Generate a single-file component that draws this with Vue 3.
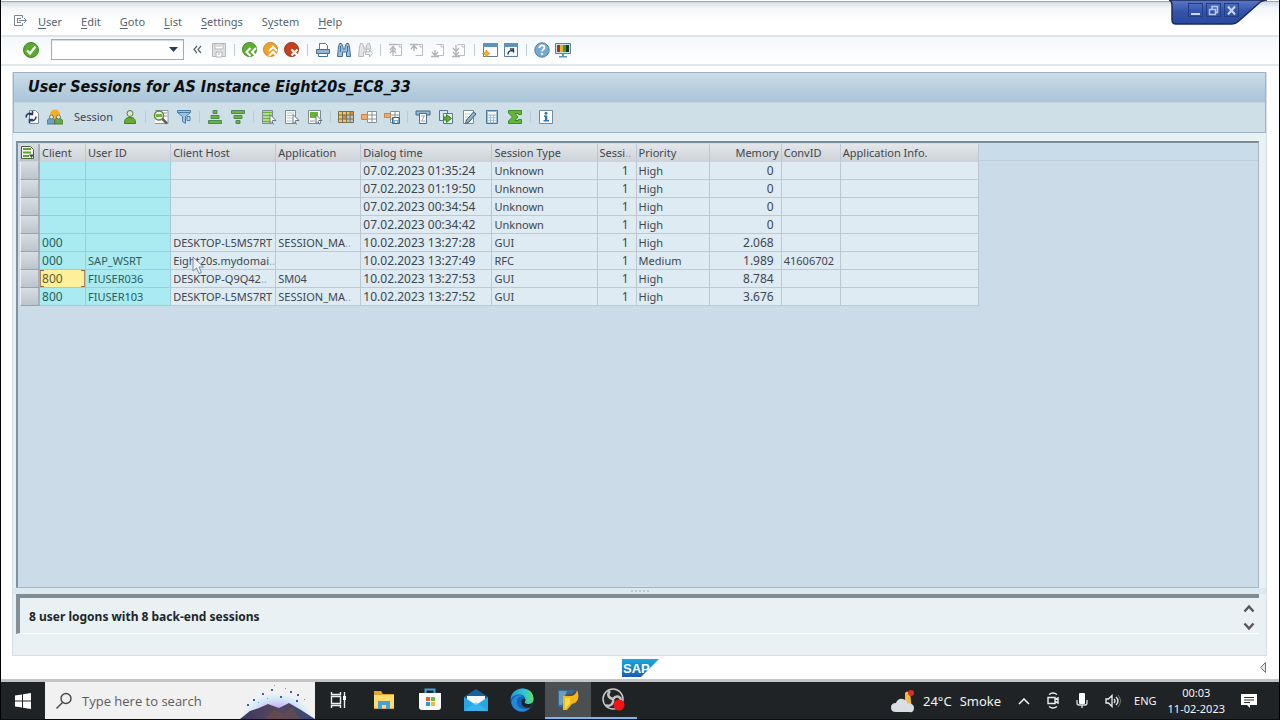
<script setup>
const menus = [
  ['U', 'ser'], ['E', 'dit'], ['G', 'oto'], ['L', 'ist'], ['S', 'ettings'], ['S', 'ystem', 'y'], ['H', 'elp'],
]

const page = '<path d="M3.500 1.500h6l3 3v10h-9z" fill="#fff" stroke="#7c8a97"/>'
const paleSheet = '<path d="M6.500 2.500h7v11h-7" fill="#fff" stroke="#b9bec3"/><path d="M11 2.500v2.500h3" fill="none" stroke="#b9bec3"/>'
const cursor = '<path d="M9 5.500v9l2-2 1.500 3M9 5.500l6 6h-3.500" fill="#fff" stroke="#6b7480"/>'
const grid = '<path d="M6.500 2.500h9v11h-9zM6.500 6h9M6.500 10h9M11 2.500v11" fill="#fff" stroke="#84909b"/>'

const icons = {
  ok: '<circle cx="8" cy="8" r="7.500" fill="#5aaa2e" stroke="#3f8a25"/><path d="M4 8.500l3 3 5.500-7" fill="none" stroke="#fff" stroke-width="2.200"/>',
  save: '<path d="M1.500 1.500h13v13h-13z" fill="#dfe1e3" stroke="#b3b7bb"/><path d="M4 2h8v5H4zM5 10h6v5H5z" fill="#fff" stroke="#b3b7bb"/><path d="M5 4h6M7 12h2" stroke="#b3b7bb"/>',
  back: '<circle cx="7.500" cy="7.500" r="7" fill="#5fae32" stroke="#43852a"/><path d="M8.500 6l-4 4 4 4M14 6l-4 4 4 4" fill="none" stroke="#fff" stroke-width="2"/>',
  exit: '<circle cx="7.500" cy="7.500" r="7" fill="#f2a122" stroke="#c9832b"/><path d="M6 9l4-4 4 4M6 14l4-4 4 4" fill="none" stroke="#fff" stroke-width="2"/>',
  cancel: '<circle cx="7.500" cy="7.500" r="7" fill="#c5401c" stroke="#96321c"/><path d="M7.500 7.500l6 6M13.500 7.500l-6 6" fill="none" stroke="#fff" stroke-width="2.200"/>',
  print: '<path d="M4.500 7V1.500h6l2 2V7" fill="#fff" stroke="#5e7890"/><path d="M1.500 7.500h13v4h-13z" fill="#8fb6d8" stroke="#47708f"/><path d="M3.500 11.500h9v3h-9z" fill="#fff" stroke="#47708f"/>',
  find: '<path d="M2.500 5l1-3.500h2L7 5v2h2V5l1.500-3.500h2l1 3.500 1 9.500h-4V10H6.500v4.500h-5z" fill="#9cc1df" stroke="#3f6d96"/><path d="M4.500 4v6M11.500 4v6" stroke="#3f6d96"/>',
  findNext: '<path d="M2.500 5l1-3.500h2L7 5v2h2V5l1.500-3.500h2l1 3.500v2h-4v3H6.500v4.500h-5z" fill="#e2e4e6" stroke="#b5babf"/><path d="M8.500 10h4V7.500l3 4-3 3.500v-2.500h-4z" fill="#f3f3f3" stroke="#b5babf"/>',
  first: paleSheet + '<path d="M1 2.500h8M5 14V5M2 8l3-3.500L8 8M2 11l3-3.500 3 3.500" fill="none" stroke="#b0b5ba" stroke-width="1.300"/>',
  prev: paleSheet + '<path d="M1 2.500h8M5 9V4M2 7l3-3.500L8 7" fill="none" stroke="#b0b5ba" stroke-width="1.400"/>',
  next: paleSheet + '<path d="M1 14.500h8M5 8v5M2 10l3 3.500L8 10" fill="none" stroke="#b0b5ba" stroke-width="1.400"/>',
  last: paleSheet + '<path d="M1 14.500h8M5 3v9M2 6l3 3.500L8 6M2 10l3 3.500L8 10" fill="none" stroke="#b0b5ba" stroke-width="1.300"/>',
  newSession: '<path d="M1.500 1.500h14v13h-14z" fill="#fff" stroke="#5a7c98"/><path d="M1 1h15v4H1z" fill="#5d93bd"/><path d="M4.500 8l1 2.500 2.500 1-2.500 1-1 2.500-1-2.500-3-1 3-1z" fill="#f4b632" stroke="#d8901f"/>',
  shortcut: '<path d="M1.500 1.500h13v13h-13z" fill="#f8fbfd" stroke="#5a7c98"/><path d="M1 1h14v4H1z" fill="#5d93bd"/><path d="M5 12.500c0-3 1-4 5-4M7 7h3.500v3.500" fill="none" stroke="#263b55" stroke-width="1.400"/>',
  help: '<circle cx="8" cy="8" r="7.200" fill="#78aad0" stroke="#4c7ca4"/><path d="M5.500 6c0-3.500 5-3.500 5-.500 0 2-2.500 2-2.500 4" fill="none" stroke="#fff" stroke-width="1.800"/><circle cx="8" cy="12" r="1.100" fill="#fff"/>',
  screen: '<path d="M.5 1.500h15v10H.5z" fill="#cfe3ea" stroke="#5f8194"/><path d="M2 3h3v7H2z" fill="#bb2828"/><path d="M5 3h3v7H5z" fill="#e8b426"/><path d="M8 3h3v7H8z" fill="#3f9c3b"/><path d="M11 3h3v7h-3z" fill="#173b30"/><path d="M7 12h2v2h3v1.500H4V14h3z" fill="#4f9ba6"/>',
  refresh: '<path d="M5.500 1.500h6l3 3v10h-9z" fill="#fff" stroke="#7c8a97"/><path d="M2 8.500c0-4 3.500-5 6-3.500M8.500 2v3.500H5M12 7.500c0 4-3.500 5-6 3.500M5.500 14v-3.500H9" fill="none" stroke="#2d3872" stroke-width="1.600"/>',
  people: '<circle cx="8" cy="5.500" r="5" fill="#f4ad24"/><path d="M0 15c0-5 2-6 4-6s4 1 4 6z" fill="#6d9fc9" stroke="#48789b"/><circle cx="4.500" cy="8" r="2" fill="#d8e8f0" stroke="#5b7d92"/><path d="M7.500 15c0-5 1-6 3.500-6s5 1 5 6z" fill="#69a549" stroke="#4b7b3b"/><circle cx="11.500" cy="8" r="2" fill="#e5ead9" stroke="#69845c"/>',
  user: '<path d="M2.500 14.500c0-5 2-6 5.500-6s5.500 1 5.500 6z" fill="#64ad2d" stroke="#467b28"/><circle cx="8" cy="4.500" r="3" fill="#dce8cf" stroke="#5c793f"/>',
  detail: '<path d="M2 1.500h13v13H2" fill="#fff" stroke="#89949d"/><path d="M10 4h4M10 7h4" stroke="#89949d"/><circle cx="6" cy="6.500" r="4.500" fill="#eef5e9" stroke="#69803f" stroke-width="1.500"/><path d="M3 5h6v3H3z" fill="#6db23b"/><path d="M9.500 10l4.500 4.500" stroke="#5b6357" stroke-width="2.500"/>',
  filter: '<path d="M1.500 1.500h13v2l-5 4v7l-3-2v-5l-5-4z" fill="#9cc5e2" stroke="#477da6"/><path d="M2 3.500h12" stroke="#477da6"/><path d="M11 7.500h3v4h-3z" fill="#b8d6eb" stroke="#477da6"/>',
  sortUp: '<path d="M6 1.500h4v3H6zM4 6.500h8v3H4zM1.500 11.500h13v3h-13z" fill="#6cb33f" stroke="#4a8a5a"/>',
  sortDown: '<path d="M1.500 1.500h13v3h-13zM4 6.500h8v3H4zM6 11.500h4v3H6z" fill="#6cb33f" stroke="#4a8a5a"/>',
  selectAll: '<path d="M1.500 1.500h10v13h-10z" fill="#fff" stroke="#7c8a97"/><path d="M2 3.500h9M2 6.500h9M2 9.500h7M2 12.500h7" stroke="#67b52c" stroke-width="2"/>' + cursor,
  deselect: '<path d="M1.500 1.500h10v13h-10z" fill="#fff" stroke="#7c8a97"/><path d="M3 4h7M3 6.500h5M3 9h5M3 12h5" stroke="#bac2c8"/>' + cursor,
  selectBlock: '<path d="M1.500 1.500h12v13h-12z" fill="#fff" stroke="#7c8a97"/><path d="M3 3h8v6H3z" fill="#67b52c"/><path d="M3 12h5" stroke="#8d999f"/>' + cursor,
  layout: '<path d="M.5 2.500h15v11H.5z" fill="#f0ca55" stroke="#776f56"/><path d="M4 6h4v4H4zM12 3h3v3h-3z" fill="#e7853d"/><path d="M8 6h7v7H8z" fill="#b8c9cd"/><path d="M.5 6h15M.5 10h15M4.500 2.500v11M8.500 2.500v11M12 2.500v11" stroke="#776f56" fill="none"/>',
  layoutPick: grid + '<path d="M.5 5.500h6v5h-6z" fill="#efad68" stroke="#c98445"/>',
  layoutSave: grid + '<path d="M.5 4.500h6v4h-6z" fill="#efad68" stroke="#c98445"/><path d="M8.500 8.500h7v6h-7z" fill="#84aece" stroke="#3b688e"/><path d="M10 9h4v2h-4zM11 12h2v2h-2z" fill="#fff"/>',
  preview: '<path d="M1 2h14v4H1z" fill="#8eb9d5" stroke="#416884"/><path d="M4.500 4.500h7v10h-7z" fill="#fff" stroke="#536b7d"/><path d="M6 7h4M6 12h4M9 7l-2 5" stroke="#9aa8b2"/>',
  export: '<path d="M1.500 1.500h8v10h-8z" fill="#d8e8f3" stroke="#59788d"/><path d="M5.500 4.500h9v10h-9z" fill="#eff6f8" stroke="#59788d"/><path d="M5.500 8h3V5.500l5 4-5 4V11h-3z" fill="#5cae32" stroke="#37801f"/>',
  edit: '<path d="M2.500 1.500h10v13h-10z" fill="#fff" stroke="#7c8a97"/><path d="M4 5h5M4 8h3M4 11h2" stroke="#b8c3cc"/><path d="M12.500 3l2.500 2-7 8-3.500 1.500 1-3.500z" fill="#8bb4d2" stroke="#395a78"/>',
  calc: '<path d="M2.500 1.500h11v13h-11z" fill="#9dbfd6" stroke="#4e7692"/><path d="M4 3h8v2.500H4z" fill="#fff"/><path d="M4 7.500h2m1 0h2m1 0h2M4 10h2m1 0h2m1 0h2M4 12.500h2m1 0h2m1 0h2" stroke="#fff" stroke-width="1.500"/>',
  sum: '<path d="M1.500 1.500h13v4h-3v-1H8l3 3.500-3 3.500h3.500v-1h3v4h-13V12l4-4-4-4z" fill="#65b637" stroke="#3b8b2c"/>',
  info: '<path d="M1.500 1.500h13v13h-13z" fill="#fff" stroke="#78899a"/><circle cx="8" cy="4.200" r="1.500" fill="#2e77aa"/><path d="M6 6.500h3.300V11H11v1.500H5.500V11H7V8H6z" fill="#2e77aa"/>',
}

const toolbar = [
  ['save', 'Save'], null, ['back', 'Back'], ['exit', 'Exit'], ['cancel', 'Cancel'], null,
  ['print', 'Print'], ['find', 'Find'], ['findNext', 'Find next'], null,
  ['first', 'First page'], ['prev', 'Previous page'], ['next', 'Next page'], ['last', 'Last page'], null,
  ['newSession', 'New session'], ['shortcut', 'Create shortcut'], null, ['help', 'Help'], ['screen', 'Customize layout'],
]
const actions = [
  ['user', 'User'], null, ['detail', 'Details'], ['filter', 'Filter'], null,
  ['sortUp', 'Sort ascending'], ['sortDown', 'Sort descending'], null,
  ['selectAll', 'Select all'], ['deselect', 'Deselect all'], ['selectBlock', 'Select block'], null,
  ['layout', 'Change layout'], ['layoutPick', 'Choose layout'], ['layoutSave', 'Save layout'], null,
  ['preview', 'Print preview'], ['export', 'Export'], ['edit', 'Word processing'], ['calc', 'Spreadsheet'], ['sum', 'Total'], null,
  ['info', 'Information'],
]

const columns = [
  ['Client', 46], ['User ID', 85], ['Client Host', 105], ['Application', 85], ['Dialog time', 131], ['Session Type', 105],
  ['Sessi~', 39], ['Priority', 73], ['Memory', 72], ['ConvID', 59], ['Application Info.', 138],
]
const rows = [
  ['', '', '', '', '07.02.2023 01:35:24', 'Unknown', '1', 'High', '0', '', ''],
  ['', '', '', '', '07.02.2023 01:19:50', 'Unknown', '1', 'High', '0', '', ''],
  ['', '', '', '', '07.02.2023 00:34:54', 'Unknown', '1', 'High', '0', '', ''],
  ['', '', '', '', '07.02.2023 00:34:42', 'Unknown', '1', 'High', '0', '', ''],
  ['000', '', 'DESKTOP-L5MS7RT', 'SESSION_MA~', '10.02.2023 13:27:28', 'GUI', '1', 'High', '2.068', '', ''],
  ['000', 'SAP_WSRT', 'Eight20s.mydomai~', '', '10.02.2023 13:27:49', 'RFC', '1', 'Medium', '1.989', '41606702', ''],
  ['800', 'FIUSER036', 'DESKTOP-Q9Q42~', 'SM04', '10.02.2023 13:27:53', 'GUI', '1', 'High', '8.784', '', ''],
  ['800', 'FIUSER103', 'DESKTOP-L5MS7RT', 'SESSION_MA~', '10.02.2023 13:27:52', 'GUI', '1', 'High', '3.676', '', ''],
]
const digitColumns = [0, 4, 6, 8]
const cellClass = (r, c) => ({
  key: c < 2,
  num: c === 6 || c === 8,
  digits: digitColumns.includes(c),
  picked: r === 6 && c === 0,
})
</script>

<template>
  <div class="desktop">
    <div class="sap">
      <nav class="menu">
        <button class="menu-icon" aria-label="Window menu">
          <svg width="15" height="13" viewBox="0 0 15 13"><path d="M9.500 4V1.500h-8v10h8V9M4 4.500h4M4 8.500h4M4.500 4.500v4" fill="none" stroke="#77838f" /><path d="M6 6.500h7M11 4l2.500 2.500L11 9" fill="none" stroke="#77838f" /></svg>
        </button>
        <button v-for="m in menus" :key="m[1]"><template v-if="m[2]">S<u>y</u>stem</template><template v-else><u>{{ m[0] }}</u>{{ m[1] }}</template></button>
      </nav>

      <div class="winbox">
        <svg class="winshape" width="98" height="28" viewBox="0 0 98 28">
          <defs><linearGradient id="wb" x2="0" y2="1"><stop offset="0" stop-color="#5a78c8" /><stop offset=".5" stop-color="#3253a8" /><stop offset="1" stop-color="#2948a0" /></linearGradient></defs>
          <path d="M0 0q3 1 3 5v15q0 4 4 4h55q5 0 9-4l18-16q4-4 9-4z" fill="url(#wb)" stroke="#1c2a58" stroke-width="1.500" />
        </svg>
        <div class="winbtns">
          <button aria-label="Minimize"><svg width="13" height="13"><path d="M2 10h9" stroke="#c9d8fa" stroke-width="2" /></svg></button>
          <button aria-label="Restore"><svg width="13" height="13"><path d="M2.500 5.500h6v5h-6zM5 5V2.500h5.500v6H9" fill="none" stroke="#b7c9f3" stroke-width="1.500" /></svg></button>
          <button aria-label="Close"><svg width="13" height="13"><path d="M3 2.500l7 8M10 2.500l-7 8" stroke="#c9d8fa" stroke-width="2" /></svg></button>
        </div>
      </div>

      <div class="toolbar">
        <button class="ic" aria-label="Enter"><svg viewBox="0 0 16 16" v-html="icons.ok" /></button>
        <div class="combo">
          <input type="text" aria-label="Command field">
          <button aria-label="Command history"><svg width="9" height="6"><path d="M0 0h9L4.500 5z" fill="#2c3a52" /></svg></button>
        </div>
        <button class="fold" aria-label="Hide command field"><svg width="9" height="9"><path d="M4 1L1 4.500 4 8M8 1L5 4.500 8 8" fill="none" stroke="#59636e" stroke-width="1.200" /></svg></button>
        <template v-for="(t, i) in toolbar" :key="i">
          <button v-if="t" class="ic" :aria-label="t[1]"><svg viewBox="0 0 16 16" v-html="icons[t[0]]" /></button>
          <span v-else class="sep" />
        </template>
      </div>

      <main class="work">
        <header class="head">
          <h1>User Sessions for AS Instance Eight20s_EC8_33</h1>
          <div class="actions">
            <button class="ic" aria-label="Refresh"><svg viewBox="0 0 16 16" v-html="icons.refresh" /></button>
            <button class="ic" aria-label="Users"><svg viewBox="0 0 16 16" v-html="icons.people" /></button>
            <button class="session">Session</button>
            <template v-for="(t, i) in actions" :key="i">
              <button v-if="t" class="ic" :aria-label="t[1]"><svg viewBox="0 0 16 16" v-html="icons[t[0]]" /></button>
              <span v-else class="sep" />
            </template>
          </div>
        </header>

        <section class="list">
          <table>
            <colgroup><col class="selcol"><col v-for="c in columns" :key="c[0]" :style="{ width: c[1] + 'px' }"></colgroup>
            <thead>
              <tr>
                <th class="corner"><button aria-label="Select all rows"><svg width="15" height="15"><path d="M1.500 1.500h9l3 3v9h-12z" fill="#f4f8ee" stroke="#4c5b45" /><path d="M3 4h8M3 7.500h8M3 11h6" stroke="#5da52b" stroke-width="2" /><path d="M9 9.500h5l-2.500 3.500z" fill="#445" /></svg></button></th>
                <th v-for="(c, i) in columns" :key="c[0]" :class="{ num: i === 8 }">{{ c[0].replace('~', '') }}<span v-if="c[0].endsWith('~')" class="more">..</span></th>
              </tr>
            </thead>
            <tbody>
              <tr v-for="(r, ri) in rows" :key="ri">
                <th class="sel" scope="row" aria-label="Select row" />
                <td v-for="(v, ci) in r" :key="ci" :class="cellClass(ri, ci)">{{ v.replace('~', '') }}<span v-if="v.endsWith('~')" class="more">..</span></td>
              </tr>
            </tbody>
          </table>
        </section>

        <div class="splitter"><i v-for="n in 5" :key="n" /></div>

        <section class="message">
          <p>8 user logons with 8 back-end sessions</p>
          <div class="scroll">
            <button aria-label="Scroll up"><svg width="12" height="9"><path d="M1.500 7.500L6 2.500l4.500 5" fill="none" stroke="#5a5452" stroke-width="2.400" /></svg></button>
            <button aria-label="Scroll down"><svg width="12" height="9"><path d="M1.500 1.500L6 6.500l4.500-5" fill="none" stroke="#5a5452" stroke-width="2.400" /></svg></button>
          </div>
        </section>
      </main>

      <footer class="status">
        <span />
        <svg class="logo" width="37" height="18" viewBox="0 0 37 18" role="img" aria-label="SAP">
          <defs><linearGradient id="sg" x2="0" y2="1"><stop offset="0" stop-color="#17a9df" /><stop offset="1" stop-color="#1c5fae" /></linearGradient></defs>
          <path d="M0 0h37L19 18H0z" fill="url(#sg)" />
          <text x="1" y="14" class="logo-text">SAP</text>
        </svg>
        <button aria-label="Expand status bar"><svg width="8" height="13"><path d="M6.500 1.500v10L1.500 6.500z" fill="#e3e6ee" stroke="#68768c" /></svg></button>
      </footer>

      <svg class="pointer" width="13" height="19"><path d="M1 1v14l3.500-3 2.500 5.500 2.500-1L7 11h4.500z" fill="#eef3f6" stroke="#7e8a94" /></svg>
    </div>

    <div class="taskbar">
      <button class="start" aria-label="Start"><svg width="16" height="16"><path d="M0 2.500L7 1.500v6H0zM8 1.300L16 0v7.500H8zM0 8.500h7v6l-7-1zM8 8.500h8V16l-8-1.300z" fill="#fff" /></svg></button>
      <label class="search">
        <svg width="18" height="18"><circle cx="11" cy="6.500" r="5" fill="none" stroke="#484848" stroke-width="1.400" /><path d="M7.500 10.500l-6 6" stroke="#484848" stroke-width="1.500" /></svg>
        <input type="text" placeholder="Type here to search" aria-label="Type here to search">
        <svg class="scene" width="75" height="35" viewBox="0 0 75 35">
          <defs>
            <radialGradient id="glow" cx=".5" cy=".7" r=".5"><stop offset="0" stop-color="#a98af2" /><stop offset=".5" stop-color="#cbb8f6" /><stop offset=".8" stop-color="#d3e8fa" /><stop offset="1" stop-color="#f1f1f1" /></radialGradient>
            <linearGradient id="hill" x2="1"><stop offset="0" stop-color="#3c3a5e" /><stop offset=".5" stop-color="#56465b" /><stop offset="1" stop-color="#334a75" /></linearGradient>
          </defs>
          <ellipse cx="37" cy="25" rx="35" ry="26" fill="url(#glow)" />
          <path d="M0 35l10-8 9-3 9-4 11 4 10-5 12 7 14 9z" fill="url(#hill)" />
          <path d="M25 35l9-9 10 4 8-7 8 12z" fill="#6c4c4a" opacity=".6" />
          <path d="M7 20h2v2H7zM13 15h2v2h-2zM22 9h2v2h-2zM31 5h2v2h-2zM40 12h2v2h-2zM50 7h2v2h-2zM57 10h2v2h-2zM56 16h2v2h-2z" fill="#3d5fa8" />
          <path d="M18 18h1v1h-1zM27 14h1v1h-1zM34 1h1v1h-1zM45 4h1v1h-1zM64 15h1v1h-1z" fill="#53a6d8" />
        </svg>
      </label>
      <button class="app" aria-label="Task view"><svg width="18" height="18"><path d="M2.500 5.500h9v7h-9zM2.500 1v2.500h9V1M2.500 17v-2.500h9V17M15.500 1v16" fill="none" stroke="#eee" stroke-width="1.400" /><path d="M14 5h3v4h-3z" fill="#fff" /></svg></button>
      <button class="app" aria-label="File Explorer"><svg width="22" height="20"><path d="M1 1h7l2 3h11v15H1z" fill="#e3a52d" /><path d="M1 5h20v13H1z" fill="#ffdc72" /><path d="M5 11h12v8h-4v-4H9v4H5z" fill="#4c9fd6" /></svg></button>
      <button class="app" aria-label="Microsoft Store"><svg width="22" height="23"><path d="M6.500 6V1.500h9V6" fill="none" stroke="#3fa4dd" stroke-width="2" /><path d="M0 5h22v14q0 3-3 3H3q-3 0-3-3z" fill="#fafafa" /><path d="M7 9h4v4H7z" fill="#e75b37" /><path d="M12 9h4v4h-4z" fill="#77b843" /><path d="M7 14h4v4H7z" fill="#2999d8" /><path d="M12 14h4v4h-4z" fill="#f4bb2e" /></svg></button>
      <button class="app" aria-label="Mail"><svg width="24" height="22"><path d="M0 8l12-8 12 8v13H0z" fill="#16639f" /><path d="M3 7h18v9H3z" fill="#f6f9fb" /><path d="M0 8l12 8 12-8v14H0z" fill="#28a5e4" /><path d="M0 22L12 13l12 9z" fill="#42bff3" opacity=".6" /></svg></button>
      <button class="app" aria-label="Edge">
        <svg width="24" height="24" viewBox="0 0 24 24">
          <defs><linearGradient id="eg" x1="0" x2="1"><stop offset="0" stop-color="#2098db" /><stop offset=".6" stop-color="#31c5d1" /><stop offset="1" stop-color="#66dc66" /></linearGradient></defs>
          <circle cx="12" cy="12" r="11.500" fill="#1261b4" /><path d="M.6 11C2-3 24-3 23.500 11c0 5-5 6-8 4.500-2-1 0-2 0-4C15 5 5 5 .6 11z" fill="url(#eg)" /><path d="M7 13c-1 6 5 10 13 7-7 7-17 3-18.500-5C2 9 9 5 13 8.500 9 8 7 10 7 13z" fill="#2388d8" /><path d="M14.500 15c3 2 7 1 9-1l-2.500 5c-5 2-10 0-9.500-6 0-2 3-3 4-1.500z" fill="#202324" />
        </svg>
      </button>
      <button class="app active" aria-label="SAP Logon"><svg width="22" height="22"><path d="M1 1h17l-3 4H6v13H1z" fill="#3a6992" /><path d="M2 2h8L5 16H2z" fill="#6e9dbb" /><path d="M6 7h7c4 0 6-2 7-6 3 7 1 13-5 14l-5 6H6z" fill="#f5b51d" /><path d="M8 9h5v5l-5 6z" fill="#ffdb45" /></svg></button>
      <button class="app open" aria-label="OBS Studio"><svg width="24" height="24"><circle cx="11" cy="11" r="10" fill="#232527" stroke="#c9cacb" stroke-width="1.500" /><path d="M11 11C6 10 5 6 8 3M11 11c3-4 7-3 8 1M11 11c1 5-3 8-7 6" fill="none" stroke="#bfc0c1" stroke-width="2.500" /><circle cx="17" cy="17" r="5.500" fill="#f01414" /></svg></button>
      <div class="tray">
        <button class="weather">
          <svg width="24" height="24"><path d="M14 12V4q2-3 5 0l2 16h-6z" fill="#f4b942" /><circle cx="20" cy="4" r="3" fill="#d92f26" /><path d="M5 23q-5 0-5-4.500T5 14q2-5 7-4 4 1 4.500 4.500Q23 14 23 19t-5 4z" fill="#d9dee5" /></svg>
          <span>24°C</span><span>Smoke</span>
        </button>
        <button aria-label="Hidden icons"><svg width="12" height="8"><path d="M1 7l5-5 5 5" fill="none" stroke="#fff" stroke-width="1.500" /></svg></button>
        <button aria-label="Meet now"><svg width="12" height="17"><path d="M1 5.500h7v6H1zM8 7.500l3-1.500v5L8 9.500M2 2.500Q6-.5 10 2.500M2 14.500q4 3 8 0" fill="none" stroke="#eee" stroke-width="1.400" /></svg></button>
        <button aria-label="Microphone"><svg width="12" height="17"><rect x="3" y="1" width="6" height="11" rx="1" fill="#fff" /><path d="M1 8v3q0 2 2 2h6q2 0 2-2V8M6 13v3" fill="none" stroke="#ddd" stroke-width="1.300" /></svg></button>
        <button aria-label="Volume"><svg width="16" height="14"><path d="M1 5h2.500L7 1.500v11L3.500 9H1zM9 5q2 2 0 4M11 3q4 4 0 8" fill="none" stroke="#eee" stroke-width="1.300" /><path d="M13 1q5 6 0 12" fill="none" stroke="#777" /></svg></button>
        <button class="lang">ENG</button>
        <button class="clock"><span>00:03</span><span>11-02-2023</span></button>
        <button aria-label="Notifications"><svg width="16" height="16"><path d="M0 1h16v11H9v3l-3-3H0z" fill="#fff" /><path d="M3 4.500h10M3 7h10M3 9.500h6" stroke="#333" /></svg></button>
      </div>
    </div>
  </div>
</template>

<style>
body { margin: 0; background: #fff; }
</style>

<style scoped>
.desktop {
  min-height: 100vh;
  box-sizing: border-box;
  display: flex;
  flex-direction: column;
  border-left: 1px solid #000;
  border-right: 1px solid #000;
  border-bottom: 1px solid #0b0c0d;
  font: 11px/16px "Noto Sans", sans-serif;
  color: #3d4650;
}
button { font: inherit; color: inherit; background: none; border: 0; padding: 0; display: flex; align-items: center; justify-content: center; }
input { font: inherit; border: 0; outline: 0; min-width: 0; background: none; padding: 0; }
svg { display: block; flex: none; }

.sap { position: relative; flex: 1; display: flex; flex-direction: column; background: #fff; }
.menu {
  height: 34px;
  display: flex;
  align-items: center;
  gap: 19px;
  padding: 7px 12px 0;
  box-sizing: border-box;
  margin-top: 1px;
  border-top: 1px solid #98a7ad;
  background: linear-gradient(#cfdde5, #f3f7fa 6px, #fff 20px);
  color: #56616e;
}
.menu-icon { margin-right: -9px; margin-bottom: 4px; }
.menu > button { white-space: pre; }
u { text-underline-offset: 2px; }

.winbox { position: absolute; top: 0; right: 12px; }
.winbtns { position: absolute; left: 19px; top: 3px; display: flex; gap: 3px; }
.winbtns button { width: 15px; height: 14px; border: 1px solid #213c84; box-sizing: border-box; }

.toolbar {
  height: 31px;
  box-sizing: border-box;
  border-top: 2px solid #dee5e8;
  border-bottom: 2px solid #e1e8ec;
  background: linear-gradient(#f4f8fb, #fff);
  display: flex;
  align-items: center;
  gap: 5px;
  padding: 0 22px 2px;
}
.ic { width: 16px; height: 16px; flex: none; }
.ic svg { width: 16px; height: 16px; }
.combo { width: 133px; height: 21px; box-sizing: border-box; border: 1px solid #9eabb5; background: #fff; display: flex; margin: 0 4px 0 7px; box-shadow: inset 0 1px 1px #d2d9de; }
.combo input { flex: 1; padding-left: 4px; }
.combo button { width: 20px; }
.fold { width: 9px; margin-right: 4px; }
.sep { width: 1px; height: 12px; background: #bccbd6; }
.toolbar .sep { margin: 0 2px; }

.work {
  flex: 1;
  display: flex;
  flex-direction: column;
  margin: 6px 12px 0 11px;
  background: #e9f1f5;
  border: solid #d5dfe6;
  border-width: 0 1px 1px;
}
.head { border: 1px solid #9eb2c0; margin: 0 0 8px; background: #cfdfe7; }
h1 {
  margin: 0;
  height: 29px;
  padding-left: 14px;
  font: italic bold 16px/27px "DejaVu Sans Condensed", "Noto Sans", sans-serif;
  color: #0c0f12;
  background: linear-gradient(#cddfe9, #b9d0de 50%, #a9c5d8);
  white-space: nowrap;
}
.actions { height: 30px; box-sizing: border-box; display: flex; align-items: center; gap: 7px; padding: 0 10px 1px; border-top: 1px solid #c3d6e1; }
.session { margin: 0 2px 0 4px; }

.list {
  flex: 1;
  margin: 0 7px 0 3px;
  border: 1px solid #a4b5c3;
  border-top: 2px solid #7d8c9b;
  border-left: 2px solid #82919f;
  background: #cbdce8;
  background-image: linear-gradient(#c8dce9 17px, #bccddb 17px, #bccddb 18px, transparent 18px);
  padding: 1px 0 0 2px;
}
table { border-collapse: separate; border-spacing: 0; table-layout: fixed; width: 959px; }
.selcol { width: 20px; }
th, td {
  box-sizing: border-box;
  height: 18px;
  padding: 0 0 0 2px;
  line-height: 16px;
  text-align: left;
  font-weight: 400;
  white-space: nowrap;
  overflow: hidden;
  border-right: 1px solid #bcc7d1;
  border-bottom: 1px solid #bfc9d2;
}
thead th { background: linear-gradient(#e3e7ea, #cdd3d8); border-bottom-color: #ccd4da; height: 18px; padding-top: 1px; color: #3f464d; }
td { background: #deebf3; }
.key { background: #aaeaf1; border-right-color: #a5c9d3; border-bottom-color: #a4cbd5; color: #285f5d; }
.digits { font-size: 12px; }
.num { text-align: right; padding-right: 7px; }
thead .num { padding-right: 2px; }
.sel, .corner { border-right: 2px solid #a7b0b8; padding: 0; background: linear-gradient(#d8dde1, #bcc4cc); }
.sel { border-left: 1px solid #eef2f4; border-bottom: 1px solid #98a2ab; }
.more { color: #9aa5af; }
.picked {
  color: #5e5e2c;
  background:
    linear-gradient(#96694b, #96694b) 0 0 / 4px 1px, linear-gradient(#96694b, #96694b) 100% 0 / 4px 1px,
    linear-gradient(#96694b, #96694b) 0 100% / 4px 1px, linear-gradient(#96694b, #96694b) 100% 100% / 4px 1px,
    linear-gradient(#b5875d, #b5875d) 0 0 / 1px 100%, linear-gradient(#b5875d, #b5875d) 100% 0 / 1px 100%,
    #fdf09b;
  background-repeat: no-repeat;
}

.splitter { height: 6px; display: flex; gap: 2px; justify-content: center; align-items: center; background: #dde9f0; }
.splitter i { width: 2px; height: 2px; background: #bdc9d2; }
.message {
  height: 40px;
  box-sizing: border-box;
  margin: 0 7px 21px 3px;
  border-top: 4px solid #818b91;
  border-left: 4px solid #858f97;
  border-bottom: 1px solid #fff;
  display: flex;
  justify-content: space-between;
  align-items: center;
  padding: 3px 4px 0 9px;
}
.message p { margin: 0; font-size: 12px; font-weight: 700; color: #20262b; }
.scroll { display: flex; flex-direction: column; gap: 9px; }

.status { height: 26px; box-sizing: border-box; border-bottom: 3px solid #c2c4c7; display: grid; grid-template-columns: 1fr auto 1fr; align-items: center; padding: 0 12px; }
.status button { justify-self: end; }
.logo-text { font: bold 13px "Liberation Sans", sans-serif; fill: #fff; }
.pointer { position: absolute; left: 191px; top: 256px; }

.taskbar { height: 37px; display: flex; background: #202325; color: #f4f4f4; }
.start { width: 44px; }
.search { width: 270px; box-sizing: border-box; display: flex; align-items: center; background: #f1f1f1; padding-left: 10px; gap: 9px; overflow: hidden; }
.search input { flex: 1; font: 13px/20px "Open Sans", "Noto Sans", sans-serif; color: #555; }
.search input::placeholder { color: #5c5c5c; opacity: 1; }
.scene { align-self: flex-end; }
.app { width: 46px; box-sizing: border-box; border-bottom: 2px solid transparent; }
.active { background: #4b4f51; border-bottom-color: #76b9ed; }
.open { border-bottom-color: #76b9ed; }
.tray { margin-left: auto; display: flex; align-items: center; gap: 17px; padding-right: 22px; }
.weather { gap: 8px; font-size: 13px; }
.tray .clock { flex-direction: column; margin: 0 -1px 0 -6px; }
.lang { margin-left: -4px; }
</style>
